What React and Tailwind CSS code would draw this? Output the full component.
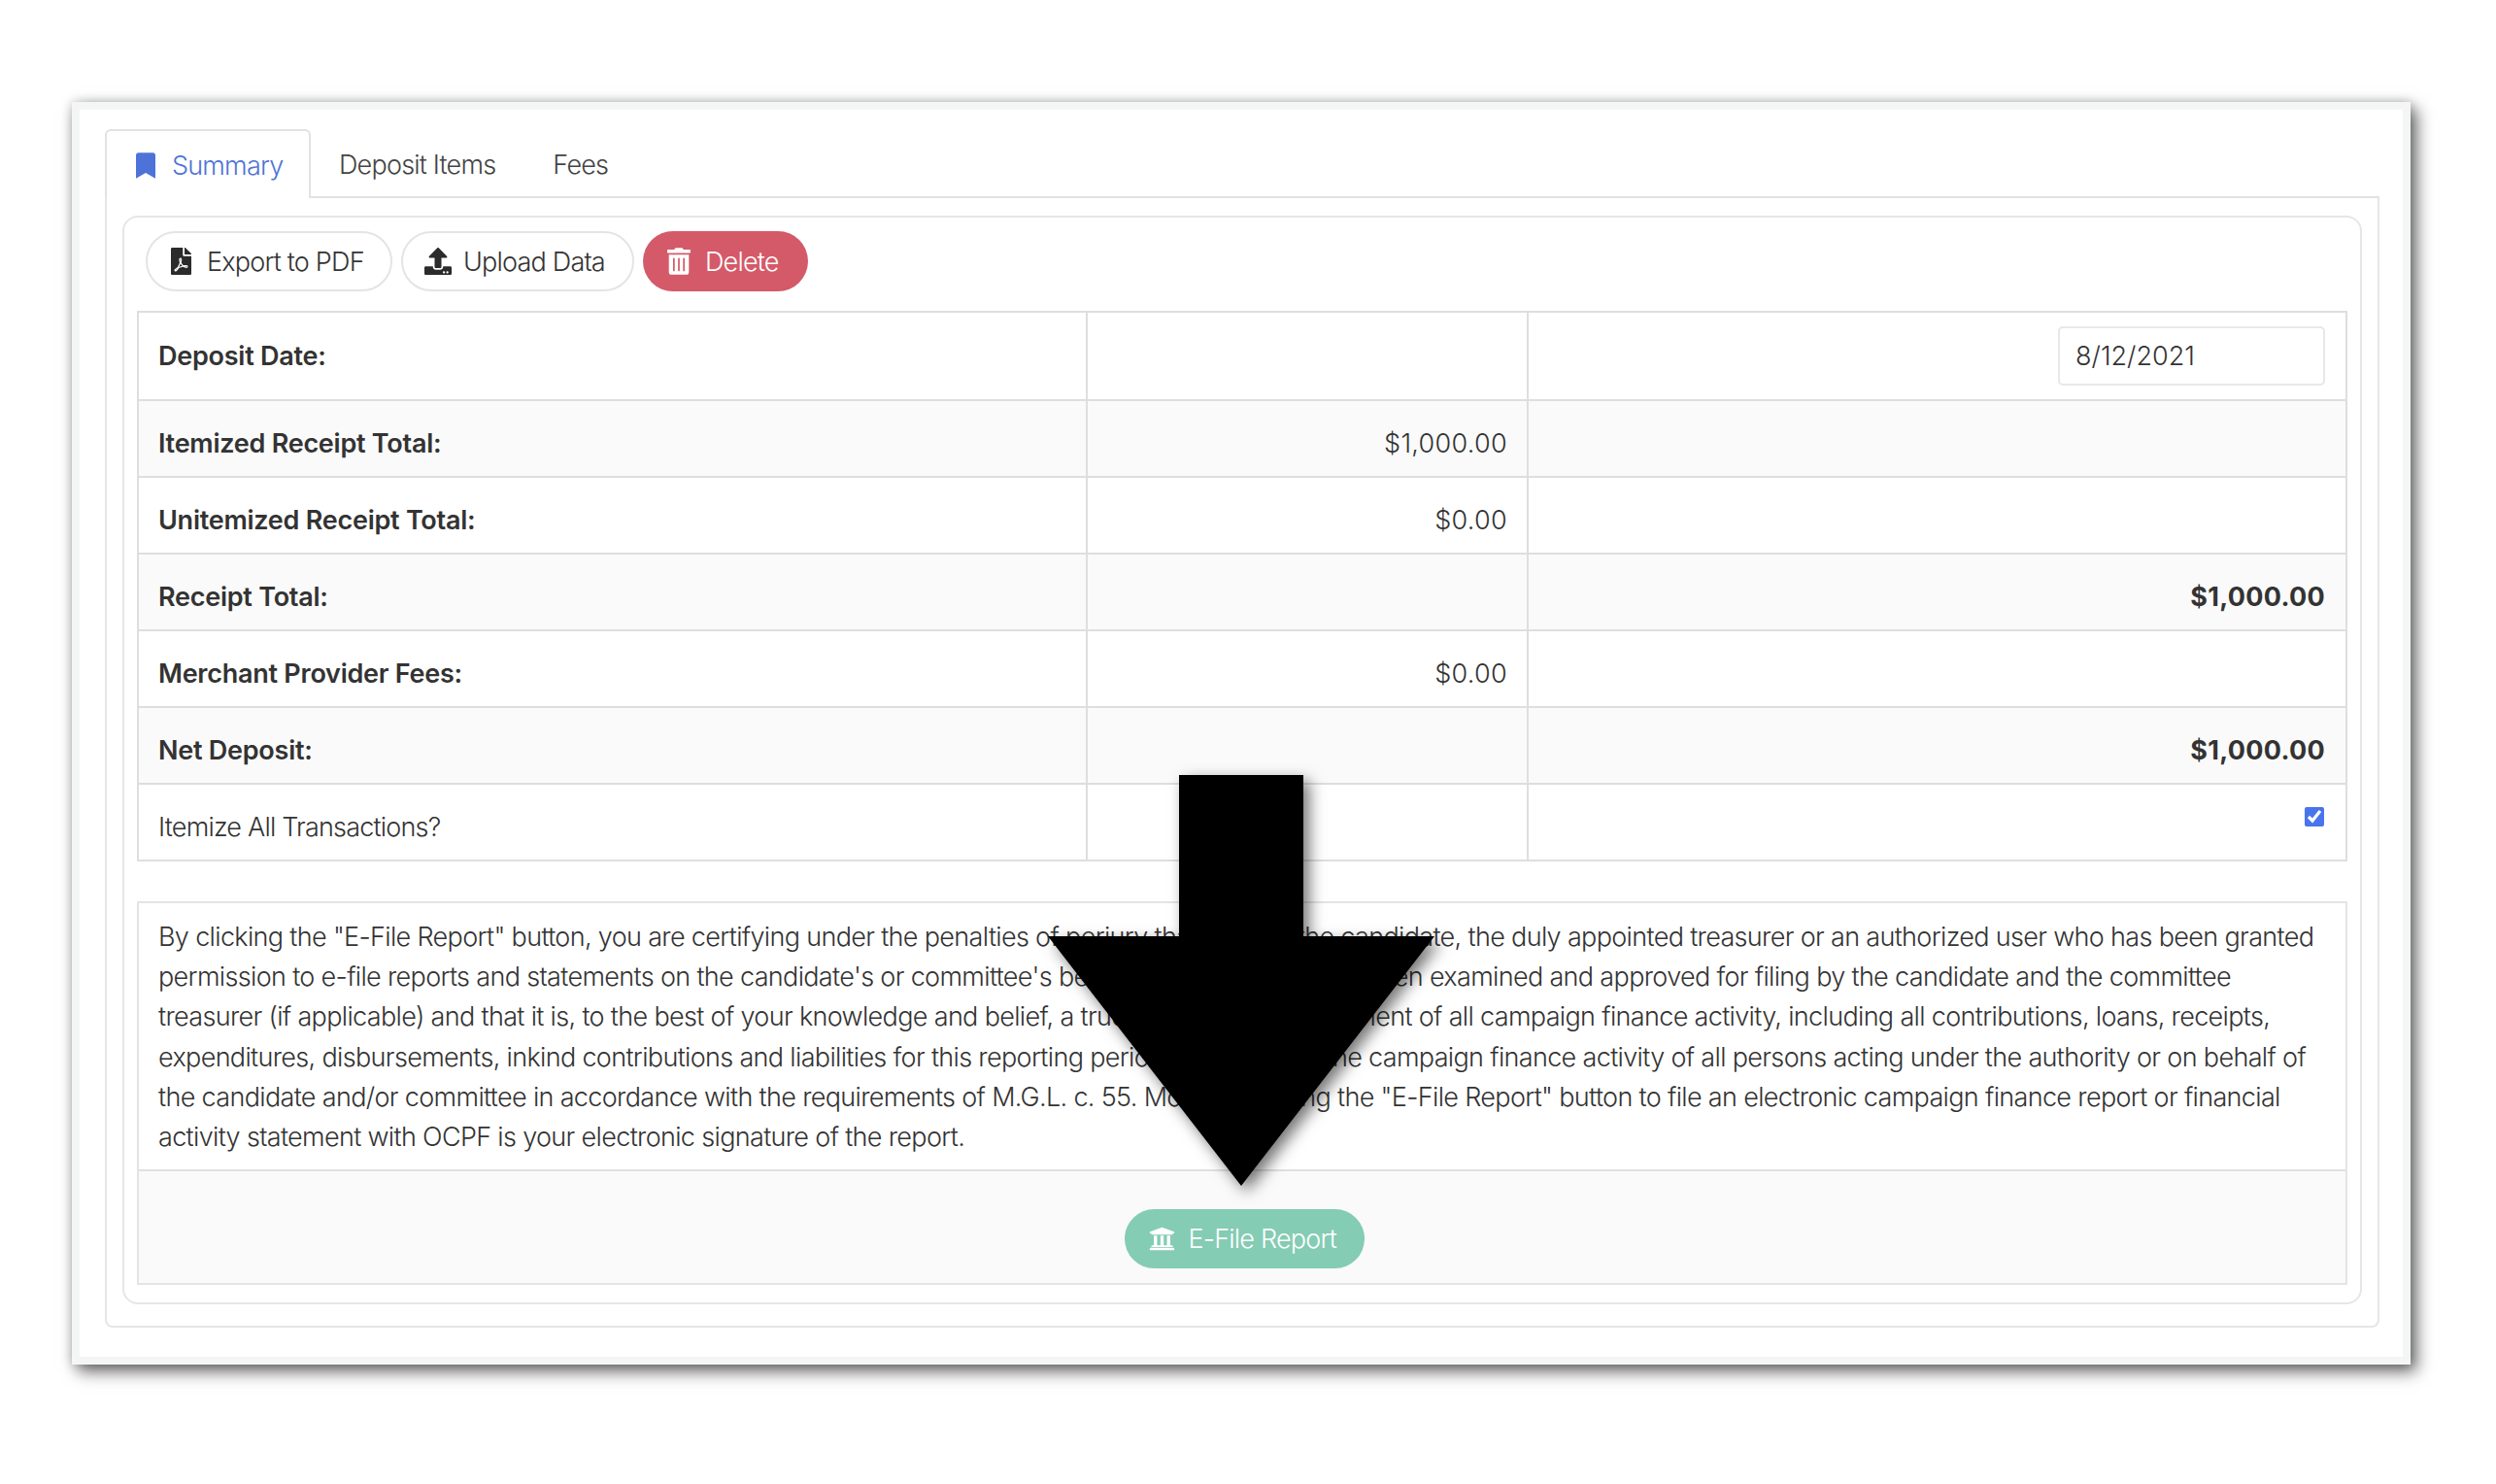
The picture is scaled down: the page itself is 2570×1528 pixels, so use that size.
import React from 'react';
import { FaBookmark, FaFilePdf, FaUpload, FaTrashAlt, FaUniversity } from 'react-icons/fa';

const rows = [
  { label: 'Itemized Receipt Total:', mid: '$1,000.00', shade: true },
  { label: 'Unitemized Receipt Total:', mid: '$0.00' },
  { label: 'Receipt Total:', right: '$1,000.00', shade: true },
  { label: 'Merchant Provider Fees:', mid: '$0.00' },
  { label: 'Net Deposit:', right: '$1,000.00', shade: true },
];

const Arrow = () => (
  <svg
    className="absolute left-[1079px] top-[798px] w-[398px] h-[423px] drop-shadow-[6px_6px_8px_rgba(0,0,0,0.55)]"
    viewBox="0 0 398 423"
  >
    <path d="M135 0H263V166H398L199 423L0 166H135Z" fill="#000" />
  </svg>
);

const App = () => {
  const cell = 'border-2 border-[#dedede] px-[20px] align-top pt-[23px] pb-0';
  const label = 'font-semibold tracking-[-0.25px]';
  const body = 'font-light tracking-[-0.8px]';

  return (
    <div className="relative w-[2570px] h-[1528px] bg-white pt-[105px] pl-[74px] font-['Inter',sans-serif] text-[27px] leading-[41px] text-[#333]">
      <div className="w-[2408px] h-[1300px] border-8 border-[#f4f6f6] bg-white pt-[20px] pl-[26px] pr-[24px] shadow-[6px_7px_16px_rgba(0,0,0,0.6),0_0_10px_rgba(0,0,0,0.18)]">
        {/* Tabs */}
        <div className={`flex h-[71px] items-stretch ${body}`}>
          <div className="flex items-center w-[212px] pl-[30px] pt-[2px] border-2 border-b-0 border-[#e2e2e2] rounded-t-[6px] text-[#4e73d8]">
            <FaBookmark className="w-[20px] h-[27px] mr-[17px]" />
            Summary
          </div>
          <div className="flex flex-1 items-center pt-[4px] border-b-2 border-[#e2e2e2] text-[#444]">
            <span className="ml-[29px]">Deposit Items</span>
            <span className="ml-[59px]">Fees</span>
          </div>
        </div>

        <div className="h-[1163px] border-2 border-t-0 border-[#e6e6e6] rounded-b-[8px] pt-[18px] px-[16px]">
          <div className="h-[1121px] border-2 border-[#e6e6e6] rounded-[16px] pt-[14px] px-[13px]">
            {/* Toolbar */}
            <div className={`flex gap-[9px] pl-[9px] ${body}`}>
              <button className="flex items-center w-[254px] h-[62px] pl-[24px] rounded-full border-2 border-[#e4e4e4] text-[#333]">
                <FaFilePdf className="w-[21px] h-[28px] mr-[16px] text-[#2b2b2b]" />
                Export to PDF
              </button>
              <button className="flex items-center w-[240px] h-[62px] pl-[22px] rounded-full border-2 border-[#e4e4e4] text-[#333]">
                <FaUpload className="w-[28px] h-[28px] mr-[12px] text-[#2b2b2b]" />
                Upload Data
              </button>
              <button className="flex items-center w-[170px] h-[62px] pl-[25px] rounded-full bg-[#d45a69] text-white">
                <FaTrashAlt className="w-[24px] h-[28px] mr-[15px]" />
                Delete
              </button>
            </div>

            {/* Totals */}
            <table className="mt-[20px] w-[2274px] table-fixed border-collapse">
              <colgroup>
                <col className="w-[977px]" />
                <col className="w-[454px]" />
                <col className="w-[843px]" />
              </colgroup>
              <tbody>
                <tr className="h-[91px]">
                  <td className={`border-2 border-[#dedede] px-[20px] ${label}`}>Deposit Date:</td>
                  <td className="border-2 border-[#dedede]" />
                  <td className="border-2 border-[#dedede] px-[21px]">
                    <div className="ml-auto flex items-center w-[275px] h-[61px] pl-[16px] rounded-[5px] border-2 border-[#e8e8e8] font-light">
                      8/12/2021
                    </div>
                  </td>
                </tr>
                {rows.map((row) => (
                  <tr key={row.label} className={`h-[79px] ${row.shade ? 'bg-[#fafafa]' : 'bg-white'}`}>
                    <td className={`${cell} ${label}`}>{row.label}</td>
                    <td className={`${cell} text-right font-light tracking-[0.3px]`}>{row.mid}</td>
                    <td className={`${cell} !pr-[21px] text-right font-bold tracking-[0.3px]`}>{row.right}</td>
                  </tr>
                ))}
                <tr className="h-[79px]">
                  <td className={`${cell} ${body}`}>Itemize All Transactions?</td>
                  <td className={cell} />
                  <td className={`${cell} text-right`}>
                    <input type="checkbox" checked readOnly className="w-[20px] h-[20px] align-top accent-[#4874ee] relative -left-[2px]" />
                  </td>
                </tr>
              </tbody>
            </table>

            {/* Certification */}
            <div className="mt-[41px] border-2 border-[#e4e4e4]">
              <p className="px-[20px] pt-[14px] pb-[13px] leading-[41.2px] font-light tracking-[-0.66px]">
                By clicking the "E-File Report" button, you are certifying under the penalties of perjury that you are the candidate, the duly appointed treasurer or an authorized user who has been granted permission to e-file reports and statements on the candidate's or committee's behalf, that this report has been examined and approved for filing by the candidate and the committee treasurer (if applicable) and that it is, to the best of your knowledge and belief, a true and complete statement of all campaign finance activity, including all contributions, loans, receipts, expenditures, disbursements, inkind contributions and liabilities for this reporting period and includes the campaign finance activity of all persons acting under the authority or on behalf of the candidate and/or committee in accordance with the requirements of M.G.L. c. 55. Moreover, using the "E-File Report" button to file an electronic campaign finance report or financial activity statement with OCPF is your electronic signature of the report.
              </p>
              <div className="flex justify-center h-[117px] pt-[39px] pl-[4px] border-t-2 border-[#e0e0e0] bg-[#fafafa]">
                <button className={`flex items-center w-[247px] h-[61px] pl-[25px] rounded-full bg-[#84ccb3] text-white ${body}`}>
                  <FaUniversity className="w-[27px] h-[27px] mr-[14px]" />
                  E-File Report
                </button>
              </div>
            </div>
          </div>
        </div>
      </div>
      <Arrow />
    </div>
  );
};

export default App;
